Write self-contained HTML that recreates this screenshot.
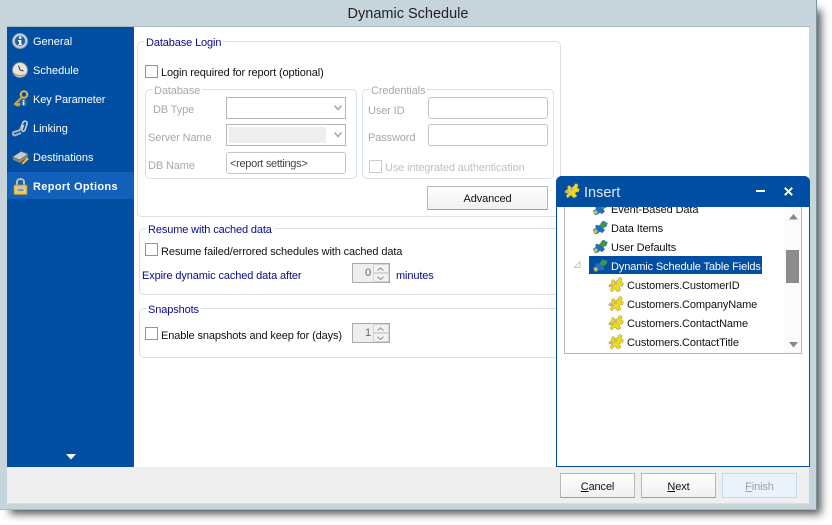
<!DOCTYPE html>
<html><head><meta charset="utf-8">
<style>
html,body{margin:0;padding:0;background:#fff;width:832px;height:525px;overflow:hidden}
*{box-sizing:border-box}
body{font-family:"Liberation Sans",sans-serif;font-size:11px;color:#111;position:relative;letter-spacing:-.12px}
.a{position:absolute}
.t{position:absolute;white-space:nowrap;line-height:14px;height:14px;margin-top:1px}
.gb{position:absolute;border:1px solid #d6e0e7;border-radius:5px}
.lg{position:absolute;white-space:nowrap;line-height:14px;height:14px;background:#fff;padding:0 2px;color:#0a0a8c;margin-top:1px}
.dis{color:#a8a8a8}
.cb{position:absolute;width:13px;height:13px;border:1px solid #949494;background:#fff}
.in{position:absolute;background:#fff;border:1px solid #b4b4b4}
.btn{position:absolute;border:1px solid #b8b8b8;background:linear-gradient(#fff,#f0f0f0);text-align:center;line-height:25px;color:#111;border-bottom-color:#a0a0a0}
.sp{position:absolute;width:38px;height:20px;border:1px solid #aaa;background:#eee}
.sp b{position:absolute;font-weight:normal;color:#666;line-height:14px}
.sp i{position:absolute;left:20px;width:16px;height:9px;background:#f2f2f2;border:1px solid #d4d4d4}
.side{position:absolute;left:33px;color:#fff;white-space:nowrap;line-height:14px;height:14px;letter-spacing:0;margin-top:1px}
.row{position:absolute;white-space:nowrap;line-height:14px;height:14px;color:#111;margin-top:1px}
svg{position:absolute;overflow:visible}
</style></head><body>
<svg width="0" height="0" style="position:absolute">
<defs>
<g id="pz"><path d="M1 8 L4 6 L3.5 4 C3.5 2.5 6 2 6.5 3.5 L7 5 L10 3 L11 1 C12 0 14.5 1 14 3 L13 5 L15.5 6 L14.5 9 L12.5 9 C11 9 11 12 12.5 12 L13 13 L10 15 L8 13.5 C8 12 5.5 12 5.5 13.5 L3.5 15 L2 12.5 L3.5 11.5 C4 10.5 2.5 9 1 10 Z" fill="#ecd81c" stroke="#9d9255" stroke-width=".5"/><path d="M1.5 8.5 L4 7 L6 9 L4.5 11 L2.5 10 Z M6 5 L9 5 L9 8 L6.5 8 Z" fill="#c4b877"/></g>
<g id="pb"><path d="M1 10 L4 8 L3.5 6 C4 4.5 6 5 6.5 6 L9 4 L10 2 C11 1 13 1 13.5 2.5 L15.5 3 L14 7 L12 7 C11 8 11.5 10 13 10 L10 13 L8 11.5 L5.5 13.5 L3 14 L2 12 Z" fill="#1d6fc4" stroke="#4d6a80" stroke-width=".4"/><path d="M9 2.5 L14.5 2.5 L14 6.5 L10.5 8 L8 6 Z" fill="#3f9a3a"/><path d="M1.5 10.5 L4 9 L6 11 L4.5 13.5 L2.5 13 Z" fill="#c9bb60"/></g>
<g id="ch"><path d="M.5 3.5L3.5 .8L6.5 3.5" fill="none" stroke="#888" stroke-width="1"/></g>
<g id="cd"><path d="M.5 .8L3.5 3.5L6.5 .8" fill="none" stroke="#888" stroke-width="1"/></g>
</defs></svg>

<!-- shadow + frame -->
<div class="a" style="left:16px;top:16px;width:799px;height:492px;background:#555;box-shadow:0 0 8px 6px #555"></div>
<div class="a" style="left:0;top:0;width:817px;height:510px;background:#c5d5db;border-right:1px solid #7d8f98;border-bottom:1px solid #a8b8c0"></div>
<div class="a" style="left:7px;top:26px;width:803px;height:1px;background:#aab9c0"></div>
<div class="t" style="left:248px;width:320px;text-align:center;top:5px;font-size:14.5px;line-height:16px;height:16px;color:#222;letter-spacing:0">Dynamic Schedule</div>

<!-- content -->
<div class="a" style="left:7px;top:27px;width:802px;height:477px;background:#fff"></div>
<div class="a" style="left:7px;top:467px;width:802px;height:37px;background:#efefef;border-bottom:1px solid #ddd"></div>

<!-- sidebar -->
<div class="a" style="left:7px;top:27px;width:127px;height:440px;background:#024ea2"></div>
<div class="a" style="left:7px;top:172px;width:127px;height:27px;background:#1360bb"></div>
<div class="side" style="top:34px">General</div>
<div class="side" style="top:63px">Schedule</div>
<div class="side" style="top:92px;letter-spacing:-.08px">Key Parameter</div>
<div class="side" style="top:121px">Linking</div>
<div class="side" style="top:150px">Destinations</div>
<div class="side" style="top:179px;font-weight:bold;letter-spacing:.35px">Report Options</div>

<svg style="left:12px;top:33px" width="16" height="16"><circle cx="8" cy="8" r="7.5" fill="#c6d2dc" stroke="#8ea0b0"/><circle cx="8" cy="8" r="5.2" fill="#24619f"/><rect x="7" y="3.5" width="2.4" height="2.2" fill="#fff"/><path d="M6 7h3.3v4.2h1v1.2H6v-1.2h1V8.2H6z" fill="#fff"/></svg>
<svg style="left:12px;top:62px" width="16" height="16"><circle cx="8" cy="8" r="7.5" fill="#e8e4da" stroke="#8c8c8c"/><path d="M8 8 L6.5 3.5 M8 8 L11.5 9" stroke="#333" stroke-width="1" fill="none"/><path d="M1.5 10 A7 7 0 0 0 14 11 A9 9 0 0 1 1.5 10" fill="#9a9a9a"/></svg>
<svg style="left:13px;top:90px" width="16" height="18"><circle cx="11" cy="4.5" r="3.3" fill="none" stroke="#e5b83a" stroke-width="2"/><path d="M9 7 L2 14 L4 15.5 L5 14 L6 15 L8 11" stroke="#d8a52e" stroke-width="2" fill="none"/><circle cx="10.5" cy="12.5" r="4" fill="#2a5f9e"/><rect x="9.8" y="9.8" width="1.6" height="1.4" fill="#fff"/><rect x="9.8" y="11.8" width="1.6" height="3.4" fill="#fff"/></svg>
<svg style="left:12px;top:119px" width="16" height="18"><path d="M8 11 L11 3.5 C12 1.2 15.5 2 15 4.8 L13 11 C12 13 9.8 12.5 10 10.5 L11.5 6" fill="none" stroke="#c9ced3" stroke-width="1.6"/><path d="M10 9 L7 11.5 L2 13 C0 14 1 17 3.5 16.2 L9 14" fill="none" stroke="#aeb4ba" stroke-width="2"/></svg>
<svg style="left:12px;top:148px" width="17" height="17"><path d="M0.5 9 L9 3.5 L16 6 L8 12 Z" fill="#c9ccce" stroke="#666" stroke-width=".6"/><path d="M0.5 9 L8 12 L16 6 L16 9 L8 15 L1 12 Z" fill="#85898d" stroke="#555" stroke-width=".5"/><path d="M9 16 L15 9.5 L17 11 L11 16.5 Z" fill="#eebe36"/><path d="M9 16 L10 14.5 L11 16.5 Z" fill="#c44"/></svg>
<svg style="left:13px;top:177px" width="15" height="18"><path d="M4 8 V5 C4 1 11 1 11 5 V8" fill="none" stroke="#bdbdb4" stroke-width="2"/><rect x="1" y="8" width="13" height="9.5" rx="1" fill="#e6c95a" stroke="#a48f3c" stroke-width=".7"/><ellipse cx="7.5" cy="13" rx="4" ry="1.8" fill="#8c97ae" stroke="#d7dce3" stroke-width=".7"/></svg>
<svg style="left:66px;top:454px" width="10" height="6"><path d="M0 0H10L5 5.5Z" fill="#fff"/></svg>

<!-- Database Login -->
<div class="gb" style="left:137px;top:41px;width:424px;height:176px"></div>
<div class="lg" style="left:144px;top:35px">Database Login</div>
<div class="cb" style="left:145px;top:65px"></div>
<div class="t" style="left:161px;top:65px">Login required for report (optional)</div>

<div class="gb" style="left:145px;top:89px;width:212px;height:90px"></div>
<div class="lg dis" style="left:152px;top:83px">Database</div>
<div class="t dis" style="left:153px;top:102px">DB Type</div>
<div class="t dis" style="left:148px;top:130px">Server Name</div>
<div class="t dis" style="left:148px;top:158px">DB Name</div>
<div class="in" style="left:226px;top:97px;width:120px;height:22px"></div>
<svg style="left:334px;top:105px" width="8" height="6"><path d="M.5 .5L4 4.5L7.5 .5" fill="none" stroke="#aaa" stroke-width="1.6"/></svg>
<div class="in" style="left:226px;top:124px;width:120px;height:22px"></div>
<div class="a" style="left:229px;top:127px;width:97px;height:16px;background:#eee"></div>
<svg style="left:334px;top:132px" width="8" height="6"><path d="M.5 .5L4 4.5L7.5 .5" fill="none" stroke="#aaa" stroke-width="1.6"/></svg>
<div class="in" style="left:226px;top:152px;width:120px;height:22px;border-radius:3px;border-color:#c4c4c4"></div>
<div class="t" style="left:230px;top:156px;color:#444;letter-spacing:-.3px">&lt;report settings&gt;</div>

<div class="gb" style="left:362px;top:89px;width:192px;height:90px"></div>
<div class="lg dis" style="left:369px;top:83px">Credentials</div>
<div class="t dis" style="left:368px;top:103px">User ID</div>
<div class="t dis" style="left:368px;top:130px">Password</div>
<div class="in" style="left:428px;top:97px;width:120px;height:22px;border-radius:3px;border-color:#c4c4c4"></div>
<div class="in" style="left:428px;top:124px;width:120px;height:22px;border-radius:3px;border-color:#c4c4c4"></div>
<div class="cb" style="left:369px;top:160px;border-color:#ccc"></div>
<div class="t" style="left:385px;top:160px;color:#c0c0c0">Use integrated authentication</div>
<div class="btn" style="left:427px;top:186px;width:121px;height:24px;line-height:25px">Advanced</div>

<!-- Resume -->
<div class="gb" style="left:139px;top:228px;width:440px;height:67px"></div>
<div class="lg" style="left:146px;top:222px">Resume with cached data</div>
<div class="cb" style="left:145px;top:243px"></div>
<div class="t" style="left:161px;top:244px">Resume failed/errored schedules with cached data</div>
<div class="t" style="left:142px;top:268px;color:#0a0a8c">Expire dynamic cached data after</div>
<div class="sp" style="left:352px;top:263px"><b style="right:18px;top:2px">0</b><i style="top:0"></i><i style="top:9px"></i><svg style="left:24px;top:3px" width="7" height="4"><use href="#ch"/></svg><svg style="left:24px;top:12px" width="7" height="4"><use href="#cd"/></svg></div>
<div class="t" style="left:396px;top:268px;color:#0a0a8c">minutes</div>

<!-- Snapshots -->
<div class="gb" style="left:139px;top:308px;width:440px;height:50px"></div>
<div class="lg" style="left:146px;top:302px">Snapshots</div>
<div class="cb" style="left:145px;top:327px"></div>
<div class="t" style="left:161px;top:328px">Enable snapshots and keep for (days)</div>
<div class="sp" style="left:352px;top:323px"><b style="right:18px;top:2px">1</b><i style="top:0"></i><i style="top:9px"></i><svg style="left:24px;top:3px" width="7" height="4"><use href="#ch"/></svg><svg style="left:24px;top:12px" width="7" height="4"><use href="#cd"/></svg></div>

<!-- Insert panel -->
<div class="a" style="left:556px;top:176px;width:254px;height:291px;background:#fff;border:1px solid #024ea2;border-radius:6px 6px 0 0"></div>
<div class="a" style="left:556px;top:176px;width:254px;height:31px;background:#024ea2;border-radius:6px 6px 0 0"></div>
<svg style="left:564px;top:183px" width="16" height="16"><use href="#pz"/></svg>
<div class="t" style="left:584px;top:184px;font-size:14.5px;line-height:16px;height:16px;color:#dfe8f2;letter-spacing:0">Insert</div>
<div class="a" style="left:756px;top:190px;width:9px;height:2px;background:#fff"></div>
<svg style="left:784px;top:187px" width="9" height="9"><path d="M.8 .8L8.2 8.2M8.2 .8L.8 8.2" stroke="#fff" stroke-width="1.9"/></svg>

<div class="a" style="left:564px;top:207px;width:238px;height:147px;border:1px solid #b4b4b4;border-top:0;background:#fff;overflow:hidden">
  <div class="a" style="left:219px;top:0;width:17px;height:146px;background:#fbfbfb"></div>
  <svg style="left:27px;top:-6px" width="16" height="16"><use href="#pb"/></svg>
  <div class="row" style="left:46px;top:-5px">Event-Based Data</div>
  <svg style="left:27px;top:13px" width="16" height="16"><use href="#pb"/></svg>
  <div class="row" style="left:46px;top:14px">Data Items</div>
  <svg style="left:27px;top:32px" width="16" height="16"><use href="#pb"/></svg>
  <div class="row" style="left:46px;top:33px">User Defaults</div>
  <svg style="left:9px;top:54px" width="7" height="7"><path d="M6 .5V6.5H.5Z" fill="none" stroke="#c4c4c4"/></svg>
  <div class="a" style="left:24px;top:49px;width:173px;height:18px;background:#024ea2"></div>
  <svg style="left:27px;top:51px" width="16" height="16"><use href="#pb"/></svg>
  <div class="row" style="left:46px;top:52px;color:#fff">Dynamic Schedule Table Fields</div>
  <svg style="left:43px;top:70px" width="16" height="16"><use href="#pz"/></svg>
  <div class="row" style="left:62px;top:71px">Customers.CustomerID</div>
  <svg style="left:43px;top:89px" width="16" height="16"><use href="#pz"/></svg>
  <div class="row" style="left:62px;top:90px">Customers.CompanyName</div>
  <svg style="left:43px;top:108px" width="16" height="16"><use href="#pz"/></svg>
  <div class="row" style="left:62px;top:109px">Customers.ContactName</div>
  <svg style="left:43px;top:127px" width="16" height="16"><use href="#pz"/></svg>
  <div class="row" style="left:62px;top:128px">Customers.ContactTitle</div>
  <svg style="left:224px;top:7px" width="10" height="6"><path d="M0 5.5L4.5 0L9 5.5Z" fill="#888"/></svg>
  <div class="a" style="left:221px;top:43px;width:13px;height:33px;background:#8c8c8c"></div>
  <svg style="left:224px;top:135px" width="10" height="6"><path d="M0 0L4.5 5.5L9 0Z" fill="#888"/></svg>
</div>

<!-- footer buttons -->
<div class="btn" style="left:560px;top:473px;width:75px;height:25px;line-height:26px"><u>C</u>ancel</div>
<div class="btn" style="left:641px;top:473px;width:75px;height:25px;line-height:26px"><u>N</u>ext</div>
<div class="btn" style="left:722px;top:473px;width:75px;height:25px;line-height:26px;background:#eaf2fb;border:1px solid #c8d9ea;color:#a0a0a0"><u>F</u>inish</div>
</body></html>
